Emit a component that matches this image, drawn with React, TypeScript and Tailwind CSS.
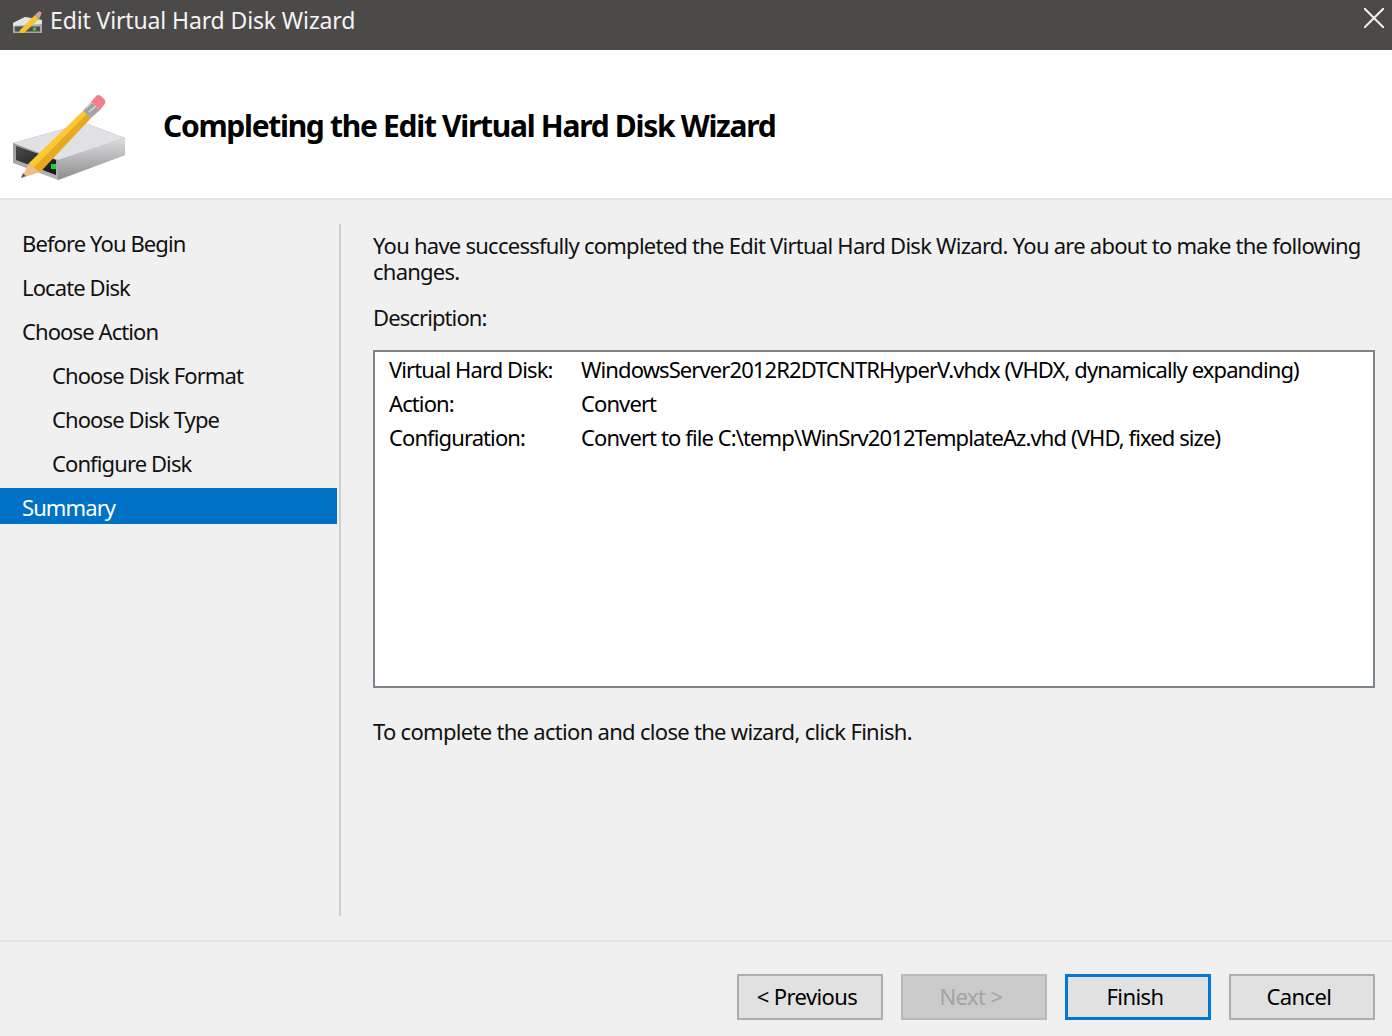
const navItems = [
  { label: "Before You Begin" },
  { label: "Locate Disk" },
  { label: "Choose Action" },
  { label: "Choose Disk Format", sub: true },
  { label: "Choose Disk Type", sub: true },
  { label: "Configure Disk", sub: true },
  { label: "Summary", active: true },
];

const details = [
  ["Virtual Hard Disk:", "WindowsServer2012R2DTCNTRHyperV.vhdx (VHDX, dynamically expanding)"],
  ["Action:", "Convert"],
  ["Configuration:", "Convert to file C:\\temp\\WinSrv2012TemplateAz.vhd (VHD, fixed size)"],
];

function DiskIcon({ className }: { className: string }) {
  return (
    <svg viewBox="0 0 115 86" className={className}>
      <defs>
        <linearGradient id="disk-side" x1="0" y1="0" x2="0" y2="1">
          <stop offset="0" stopColor="#dcdde0" />
          <stop offset="1" stopColor="#8d8d8d" />
        </linearGradient>
        <linearGradient id="disk-front" x1="0" y1="0" x2="0" y2="1">
          <stop offset="0" stopColor="#8a8a8a" />
          <stop offset="1" stopColor="#b5b5b5" />
        </linearGradient>
        <linearGradient id="disk-slot" x1="0" y1="0" x2="1" y2="1">
          <stop offset="0" stopColor="#4a4a4a" />
          <stop offset="1" stopColor="#141414" />
        </linearGradient>
      </defs>
      {/* disk body */}
      <path d="M0 49 L72 29 L112 44 L112 61 L45 86 L0 69 Z" fill="url(#disk-front)" />
      <path d="M45 66 L112 44 L112 61 L45 86 Z" fill="url(#disk-side)" />
      <path d="M0 49 L72 29 L112 44 L45 66 Z" fill="#e0e1e4" />
      <path d="M3 52 L43 66 L43 81 L3 66 Z" fill="url(#disk-slot)" />
      <rect x="38" y="70" width="5" height="5" fill="#1fd62b" />
      {/* pencil */}
      <path d="M15 70 L70 17 L78 24 L27 78 Z" fill="#fbc832" />
      <path d="M20 74 L74 20 L78 24 L27 78 Z" fill="#e9a822" />
      <path d="M15 70 L27 78 L9 84 Z" fill="#eebd8a" />
      <path d="M8 84 L10 79 L13 82 Z" fill="#5c5c5c" />
      <path d="M70 17 L78 8 L87 16 L78 24 Z" fill="#a3a3a3" />
      <path d="M73 14 L81 6 M76 18 L84 11" stroke="#d8d8d8" strokeWidth="1.5" />
      <path d="M78 8 L83 2 Q85 0 88 2 L92 6 Q93 9 91 11 L87 16 Z" fill="#f0808a" />
    </svg>
  );
}

// title bar version is a different, chunkier drawing at 16px
function SmallDiskIcon({ className }: { className: string }) {
  return (
    <svg viewBox="0 0 29 22" className={className}>
      <path d="M0 12 L12 6 L29 9 L29 22 L0 22 Z" fill="#a9a9a9" />
      <path d="M0 12 L12 6 L29 9 L29 13 L0 15 Z" fill="#e2e3e5" />
      <rect x="2" y="15.5" width="25" height="5" fill="#4f4f4f" />
      <rect x="20" y="16.5" width="3" height="3" fill="#2bd32b" />
      <path d="M7 19 L22 4 L26 8 L11 22 L6 22 Z" fill="#f6c22f" />
      <path d="M22 4 L25 1 L28 4 L26 8 Z" fill="#b9a9a0" />
      <path d="M24.5 1.5 L26.5 0 L29 2 L27.5 4 Z" fill="#e98a8f" />
    </svg>
  );
}

function WizardButton({ label, kind }: { label: string; kind?: "disabled" | "primary" }) {
  const look =
    kind === "disabled"
      ? "bg-[#cacaca] border-[#b9b9b9] text-[#a3a3a3]"
      : kind === "primary"
        ? "bg-[#e1e1e1] border-[#0078d7] text-black border-[3px]"
        : "bg-[#e1e1e1] border-[#adadad] text-black";
  return (
    <div className={`w-[146px] h-[46px] border-2 pr-[6px] pb-[2px] flex items-center justify-center tracking-[-0.6px] ${look}`}>
      {label}
    </div>
  );
}

export default function App() {
  return (
    <div className="w-[1392px] h-[1036px] flex flex-col overflow-hidden bg-[#f0f0f0] text-[22px] text-[#111] font-['Noto_Sans','Open_Sans',sans-serif] tracking-[-0.9px]">
      {/* Title bar */}
      <div className="h-[50px] shrink-0 bg-[#4c4a48] flex items-center pl-[13px] pr-[8px] pb-[8px] text-[#f4f4f4] text-[23px] tracking-[-0.13px]">
        <SmallDiskIcon className="w-[29px] h-[22px] mr-[8px] mt-[2px]" />
        <span className="flex-1 -mt-[1px]">Edit Virtual Hard Disk Wizard</span>
        <svg viewBox="0 0 20 20" className="w-[20px] h-[20px] mb-[6px]" stroke="#f2f2f2" strokeWidth="2">
          <path d="M0 0 L20 20 M20 0 L0 20" />
        </svg>
      </div>

      {/* Header */}
      <div className="h-[150px] shrink-0 bg-white border-b-2 border-[#e3e3e3] flex items-center pl-[13px]">
        <DiskIcon className="w-[115px] h-[86px] mt-[26px]" />
        <h1 className="ml-[35px] mt-[2px] text-[30px] font-bold text-black tracking-[-1.3px]">
          Completing the Edit Virtual Hard Disk Wizard
        </h1>
      </div>

      {/* Body */}
      <div className="h-[742px] shrink-0 flex border-b-2 border-[#e3e3e3]">
        <nav className="w-[337px] shrink-0 pt-[24px] flex flex-col gap-[8px]">
          {navItems.map((item) => (
            <div
              key={item.label}
              className={`h-[36px] pt-[2px] flex items-center ${item.sub ? "pl-[52px]" : "pl-[22px]"} ${item.active ? "bg-[#0072c6] text-white" : ""}`}
            >
              {item.label}
            </div>
          ))}
        </nav>
        <div className="w-[2px] shrink-0 ml-[2px] mt-[24px] mb-[24px] bg-[#cfcfcf]" />
        <main className="flex-1 pl-[32px] pr-[17px] pt-[32px]">
          <p className="leading-[26px] tracking-[-0.75px]">
            You have successfully completed the Edit Virtual Hard Disk Wizard. You are about to make the following changes.
          </p>
          <p className="mt-[20px] leading-[26px]">Description:</p>
          <div className="mt-[20px] h-[338px] border-2 border-[#7f858c] bg-white pl-[14px] text-black">
            {details.map(([name, value]) => (
              <div key={name} className="flex h-[34px] items-center">
                <span className="w-[192px] shrink-0">{name}</span>
                <span>{value}</span>
              </div>
            ))}
          </div>
          <p className="mt-[30px] leading-[26px] tracking-[-0.7px]">To complete the action and close the wizard, click Finish.</p>
        </main>
      </div>

      {/* Footer */}
      <div className="flex-1 flex justify-end gap-[18px] pt-[32px] pr-[17px]">
        <WizardButton label="< Previous" />
        <WizardButton label="Next >" kind="disabled" />
        <WizardButton label="Finish" kind="primary" />
        <WizardButton label="Cancel" />
      </div>
    </div>
  );
}
